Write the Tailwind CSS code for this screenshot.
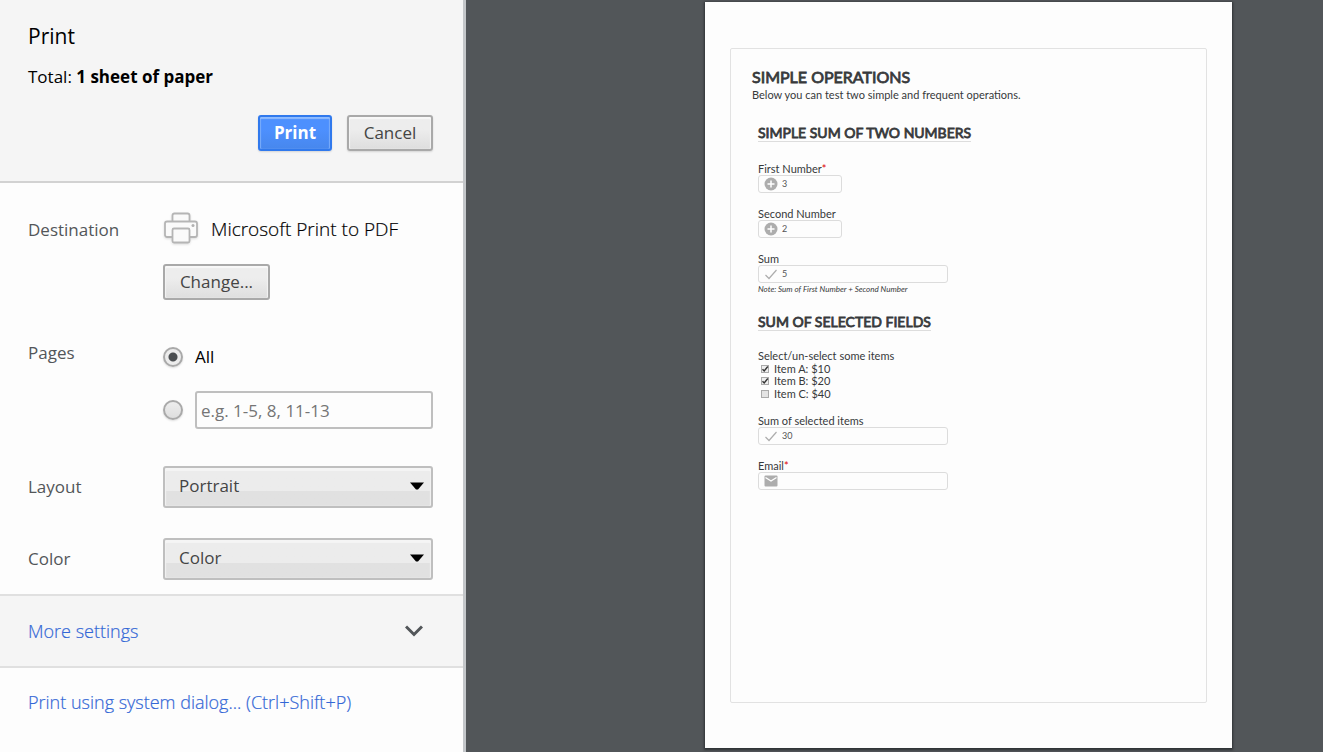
<!DOCTYPE html>
<html lang="en">
<head>
<meta charset="utf-8">
<meta name="viewport" content="width=device-width, initial-scale=1">
<title>Print</title>
<script src="https://cdn.jsdelivr.net/npm/@tailwindcss/browser@4"></script>
</head>
<body class="flex min-h-screen bg-[#525659] font-['Open_Sans',sans-serif] text-[17px] leading-6 text-black">
<aside class="w-[466px] shrink-0 border-r-3 border-[#c3c6c9] bg-[#fdfdfd]">
  <header class="border-b-2 border-[#d2d2d2] bg-[#f5f5f5] pt-5 pr-[30px] pb-[30px] pl-7">
    <h1 class="text-[21px] leading-8">Print</h1>
    <p class="mt-[13px]">Total: <b>1 sheet of paper</b></p>
    <div class="mt-[26px] flex justify-end gap-[15px]">
      <button class="h-9 w-[74px] rounded-[3px] border-2 border-[#3079ed] bg-linear-to-b from-[#4d90fe] from-40% to-[#4787ed] font-bold text-white shadow-[inset_0_2px_1px_#8fbcff,inset_1px_0_1px_#79abfa,inset_-1px_0_1px_#79abfa,0_1px_2px_#0002]">Print</button>
      <button class="h-9 w-[86px] rounded-[3px] border-2 border-[#a9a9a9] bg-linear-to-b from-[#ededed] from-38% to-[#dedede] text-[#444] shadow-[inset_0_2px_1px_#f8f8f8,inset_1px_0_1px_#f2f2f2,inset_-1px_0_1px_#f2f2f2,0_1px_2px_#0002]">Cancel</button>
    </div>
  </header>
  <section class="grid grid-cols-[135px_1fr] pt-[29px] pr-[30px] pb-[14px] pl-7 text-[#535659]">
    <h2 class="pt-[6px]">Destination</h2>
    <div>
      <div class="flex h-[34px] items-center gap-3 text-[19px] text-black">
        <svg class="h-[34px] w-9 drop-shadow-[0_1px_1px_#0002]" viewBox="0 0 36 34" fill="#fafafa" stroke="#b5b5b5" stroke-width="1.8">
          <path d="M9.5 10V3.5Q9.5 1.5 11.5 1.5H24.5Q26.500 1.5 26.500 3.5V10"/>
          <rect x="2" y="9.500" width="32" height="15.500" rx="2"/>
          <rect x="9.500" y="16.500" width="17" height="14" rx="1.500"/>
          <circle cx="30" cy="13.500" r="1.500" fill="#b0b0b0" stroke="none"/>
        </svg>
        <span class="font-light [-webkit-text-stroke:0.2px_#000]">Microsoft Print to PDF</span>
      </div>
      <button class="mt-[18px] h-9 w-[107px] rounded-[3px] border-2 border-[#a9a9a9] bg-linear-to-b from-[#ededed] from-38% to-[#dedede] text-[#444] shadow-[inset_0_2px_1px_#f8f8f8,inset_1px_0_1px_#f2f2f2,inset_-1px_0_1px_#f2f2f2]">Change...</button>
    </div>
    <h2 class="mt-[41px]">Pages</h2>
    <div class="mt-[45px]">
      <label class="flex items-center gap-3 text-black"><input type="radio" name="pages" checked class="size-5 appearance-none rounded-full border-2 border-[#a9a9a9] bg-[radial-gradient(circle,#4c4f52_4px,#ececec_5px)] shadow-[0_1px_2px_#0002]">All</label>
      <div class="mt-[22px] flex items-center gap-3">
        <input type="radio" name="pages" aria-label="Custom range" class="size-5 shrink-0 appearance-none rounded-full border-2 border-[#a9a9a9] bg-linear-to-b from-[#ededed] to-[#dedede] shadow-[0_1px_2px_#0002]">
        <input type="text" aria-label="Page range" placeholder="e.g. 1-5, 8, 11-13" class="h-[38px] w-full min-w-0 rounded-[3px] border-2 border-[#bfbfbf] bg-[#fdfdfd] px-1 placeholder:text-[#757575]">
      </div>
    </div>
    <label for="layout" class="mt-[46px]">Layout</label>
    <div class="relative mt-[37px]">
      <select id="layout" class="h-[42px] w-full appearance-none rounded-[3px] border-2 border-[#bfbfbf] bg-linear-to-b from-[#ececec] from-60% to-[#e1e1e1] to-60% pb-0.5 pl-[14px] text-[#444] shadow-[inset_0_3px_1px_#f5f5f5,inset_1px_0_1px_#f2f2f2,inset_-1px_0_1px_#f2f2f2]"><option>Portrait</option><option>Landscape</option></select>
      <svg class="pointer-events-none absolute top-4 right-[9px] h-2 w-[14px]" viewBox="0 0 14 8"><path d="M0 .5H14L8 7.500H6Z"/></svg>
    </div>
    <label for="color" class="mt-[39px]">Color</label>
    <div class="relative mt-[30px]">
      <select id="color" class="h-[42px] w-full appearance-none rounded-[3px] border-2 border-[#bfbfbf] bg-linear-to-b from-[#ececec] from-60% to-[#e1e1e1] to-60% pb-0.5 pl-[14px] text-[#444] shadow-[inset_0_3px_1px_#f5f5f5,inset_1px_0_1px_#f2f2f2,inset_-1px_0_1px_#f2f2f2]"><option>Color</option><option>Black and white</option></select>
      <svg class="pointer-events-none absolute top-4 right-[9px] h-2 w-[14px]" viewBox="0 0 14 8"><path d="M0 .5H14L8 7.500H6Z"/></svg>
    </div>
  </section>
  <button class="flex h-[74px] w-full items-center justify-between border-y-2 border-[#e0e0e0] bg-[#f5f5f5] pr-10 pl-7 text-[18px] font-light text-[#3367d6] [-webkit-text-stroke:0.2px_#3367d6]">More settings
    <svg class="h-3 w-[18px]" viewBox="0 0 18 12" fill="none" stroke="#525659" stroke-width="3"><path d="M1 1.500L9 9.500L17 1.500"/></svg>
  </button>
  <a href="#" class="mt-[22px] ml-7 inline-block text-[18px] font-light text-[#3367d6] [-webkit-text-stroke:0.2px_#3367d6]">Print using system dialog... (Ctrl+Shift+P)</a>
</aside>
<main class="flex min-w-0 flex-1 items-start justify-center pt-0.5 pl-[148px] font-['Lato',sans-serif] text-[11px] leading-3 text-[#37393b]">
  <article class="flex aspect-[527/746] w-[527px] shrink-0 flex-col bg-[#fdfdfd] px-[25px] pt-[46px] pb-[45px] shadow-[0_1px_2px_1px_#303336]">
    <form class="flex-1 rounded-[2px] border border-[#e2e2e2] px-[21px] pt-4">
      <h2 class="text-[16px] leading-6 [-webkit-text-stroke:0.8px_#37393b]">SIMPLE OPERATIONS</h2>
      <p>Below you can test two simple and frequent operations.</p>
      <div class="mt-6 px-[6px]">
        <h3 class="inline-block border-b border-[#ddd] text-[14px] leading-4 [-webkit-text-stroke:0.8px_#37393b]">SIMPLE SUM OF TWO NUMBERS</h3>
        <label for="first" class="mt-[21px] block">First Number<span class="text-[#d00]">*</span></label>
        <div class="flex h-[18px] w-[84px] items-center gap-1 rounded-[3px] border border-[#dcdcdc] pl-[5px]">
          <svg class="size-[14px] shrink-0" viewBox="0 0 14 14"><circle cx="7" cy="7" r="6.500" fill="#adadad"/><path d="M7 3.500V10.500M3.500 7H10.500" stroke="#fff" stroke-width="1.500"/></svg>
          <input id="first" value="3" class="w-full min-w-0 text-[9px] text-[#555]">
        </div>
        <label for="second" class="mt-[15px] block">Second Number</label>
        <div class="flex h-[18px] w-[84px] items-center gap-1 rounded-[3px] border border-[#dcdcdc] pl-[5px]">
          <svg class="size-[14px] shrink-0" viewBox="0 0 14 14"><circle cx="7" cy="7" r="6.500" fill="#adadad"/><path d="M7 3.500V10.500M3.500 7H10.500" stroke="#fff" stroke-width="1.500"/></svg>
          <input id="second" value="2" class="w-full min-w-0 text-[9px] text-[#555]">
        </div>
        <label for="sum" class="mt-[15px] block">Sum</label>
        <div class="flex h-[18px] w-[190px] items-center gap-1 rounded-[3px] border border-[#dcdcdc] pl-[5px]">
          <svg class="size-[14px] shrink-0" viewBox="0 0 14 14" fill="none" stroke="#adadad" stroke-width="1.200"><path d="M1.500 8L5 11.500L12.500 3"/></svg>
          <input id="sum" value="5" class="w-full min-w-0 text-[9px] text-[#555]">
        </div>
        <p class="text-[8px] italic">Note: Sum of First Number + Second Number</p>
        <h3 class="mt-[19px] inline-block border-b border-[#ddd] text-[14px] leading-4 [-webkit-text-stroke:0.8px_#37393b]">SUM OF SELECTED FIELDS</h3>
        <fieldset class="mt-[19px]">
          <legend>Select/un-select some items</legend>
          <label class="flex h-[13px] items-center gap-[5px] pl-[3px]"><span class="relative flex size-2"><input type="checkbox" checked class="peer size-2 appearance-none border border-[#aaa] bg-[#eee]"><svg class="pointer-events-none absolute inset-0 hidden peer-checked:block" viewBox="0 0 8 8" fill="none" stroke="#333" stroke-width="1.400"><path d="M1.500 4.200L3.200 6L6.800 1.500"/></svg></span>Item A: $10</label>
          <label class="flex h-3 items-center gap-[5px] pl-[3px]"><span class="relative flex size-2"><input type="checkbox" checked class="peer size-2 appearance-none border border-[#aaa] bg-[#eee]"><svg class="pointer-events-none absolute inset-0 hidden peer-checked:block" viewBox="0 0 8 8" fill="none" stroke="#333" stroke-width="1.400"><path d="M1.500 4.200L3.200 6L6.800 1.500"/></svg></span>Item B: $20</label>
          <label class="flex h-[13px] items-center gap-[5px] pl-[3px]"><input type="checkbox" class="size-2 appearance-none border border-[#aaa] bg-[#e4e4e4]">Item C: $40</label>
        </fieldset>
        <label for="total" class="mt-[15px] block">Sum of selected items</label>
        <div class="flex h-[18px] w-[190px] items-center gap-1 rounded-[3px] border border-[#dcdcdc] pl-[5px]">
          <svg class="size-[14px] shrink-0" viewBox="0 0 14 14" fill="none" stroke="#adadad" stroke-width="1.200"><path d="M1.500 8L5 11.500L12.500 3"/></svg>
          <input id="total" value="30" class="w-full min-w-0 text-[9px] text-[#555]">
        </div>
        <label for="email" class="mt-[15px] block">Email<span class="text-[#d00]">*</span></label>
        <div class="flex h-[18px] w-[190px] items-center gap-1 rounded-[3px] border border-[#dcdcdc] pl-[5px]">
          <svg class="size-[14px] shrink-0" viewBox="0 0 14 14"><rect x=".5" y="1.500" width="13" height="11" rx="1" fill="#adadad"/><path d="M1.500 3.500L7 7L12.500 3.500" fill="none" stroke="#fff" stroke-width="1.300"/></svg>
          <input id="email" type="email" class="w-full min-w-0 text-[9px] text-[#555]">
        </div>
      </div>
    </form>
  </article>
</main>
</body>
</html>
